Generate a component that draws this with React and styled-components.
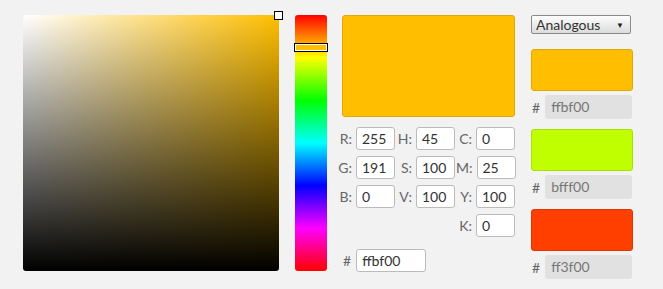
import React from 'react'
import styled, { createGlobalStyle } from 'styled-components'

const GlobalStyle = createGlobalStyle`
  body {
    margin: 0;
    background: #f2f2f2;
    font-family: Lato, "Liberation Sans", sans-serif;
  }
`;

const Page = styled.div`
  display: flex;
  align-items: flex-start;
  padding: 15px 0 0 23px;
`;

const SVBox = styled.div`
  position: relative;
  width: 256px;
  height: 256px;
  border-radius: 3px;
  background:
    linear-gradient(to top, #000 0%, rgba(0, 0, 0, 0) 100%),
    linear-gradient(to right, #fff 0%, rgba(255, 255, 255, 0) 100%),
    ${({ hue }) => hue};
`;

const SVHandle = styled.div`
  position: absolute;
  top: -4px;
  right: -4px;
  width: 9px;
  height: 9px;
  box-sizing: border-box;
  border: 1px solid #000;
  background: #fff;
`;

const HueBar = styled.div`
  position: relative;
  margin-left: 16px;
  width: 32px;
  height: 256px;
  border-radius: 3px;
  background: linear-gradient(
    to bottom,
    #f00 0%, #ff0 16.67%, #0f0 33.33%, #0ff 50%, #00f 66.67%, #f0f 83.33%, #f00 100%
  );
`;

const HueHandle = styled.div`
  position: absolute;
  left: -1px;
  top: 28px;
  width: 34px;
  height: 9px;
  box-sizing: border-box;
  border: 1px solid #000;
  box-shadow: inset 0 0 0 1px #fff;
  background: ${({ color }) => color};
`;

const Middle = styled.div`
  margin-left: 15px;
  width: 173px;
`;

const Preview = styled.div`
  height: 102px;
  box-sizing: border-box;
  border: 1px solid #e0a800;
  border-radius: 3px;
  background: ${({ color }) => color};
`;

const ValueGrid = styled.div`
  display: grid;
  grid-template-columns: repeat(3, 59px);
  column-gap: 1px;
  row-gap: 6px;
  margin: 10px 0 0 -6px;
`;

const Field = styled.div`
  display: flex;
  align-items: center;
  grid-column: ${({ col }) => col || 'auto'};
`;

const Label = styled.span`
  flex: 1;
  text-align: right;
  padding-right: 4px;
  font-size: 14px;
  color: #666;
`;

const NumInput = styled.input`
  width: ${({ w }) => w || 39}px;
  height: 23px;
  box-sizing: border-box;
  border: 1px solid #bbb;
  border-radius: 3px;
  padding: 0 5px;
  background: #fff;
  font-family: Lato, "Liberation Sans", sans-serif;
  font-size: 14px;
  color: #333;
  outline: none;
`;

const HexRow = styled.div`
  display: flex;
  align-items: center;
  gap: 5px;
  margin-top: ${({ top }) => top}px;
`;

const Hash = styled.span`
  font-size: 14px;
  color: #666;
  margin-left: 1px;
`;

const Right = styled.div`
  margin-left: 16px;
  width: 102px;
`;

const SelectWrap = styled.div`
  position: relative;
  width: 100px;

  &::after {
    content: '▼';
    position: absolute;
    right: 7px;
    top: 5px;
    font-size: 8px;
    color: #222;
    pointer-events: none;
  }
`;

const Select = styled.select`
  display: block;
  appearance: none;
  width: 100px;
  height: 19px;
  box-sizing: border-box;
  border: 1px solid #8a8a8a;
  border-radius: 2px;
  padding: 0 0 0 4px;
  background: linear-gradient(to bottom, #fdfdfd, #dcdcdc);
  font-family: Lato, "Liberation Sans", sans-serif;
  font-size: 14px;
  color: #333;
  outline: none;
`;

const SchemeList = styled.div`
  display: flex;
  flex-direction: column;
  gap: 10px;
  margin-top: 15px;
`;

const Scheme = styled.div`
  display: flex;
  flex-direction: column;
  gap: 4px;
`;

const Swatch = styled.div`
  height: 42px;
  box-sizing: border-box;
  border: 1px solid ${({ edge }) => edge};
  border-radius: 3px;
  background: ${({ color }) => color};
`;

const HexBox = styled.div`
  width: 87px;
  height: 24px;
  box-sizing: border-box;
  padding-left: 6px;
  line-height: 24px;
  border-radius: 3px;
  background: #e1e1e1;
  font-size: 14px;
  color: #777;
`;

const rows = [
  [['R', '255'], ['H', '45'], ['C', '0']],
  [['G', '191'], ['S', '100'], ['M', '25']],
  [['B', '0'], ['V', '100'], ['Y', '100']],
];

const schemes = [
  { hex: 'ffbf00', edge: '#e3a900' },
  { hex: 'bfff00', edge: '#a9e000' },
  { hex: 'ff3f00', edge: '#e03500' },
];

export default function App() {
  return (
    <>
      <GlobalStyle />
      <Page>
        <SVBox hue="#ffbf00">
          <SVHandle />
        </SVBox>
        <HueBar>
          <HueHandle color="#ffbf00" />
        </HueBar>
        <Middle>
          <Preview color="#ffbf00" />
          <ValueGrid>
            {rows.flat().map(([name, value]) => (
              <Field key={name}>
                <Label>{name}:</Label>
                <NumInput readOnly value={value} />
              </Field>
            ))}
            <Field col={3}>
              <Label>K:</Label>
              <NumInput readOnly value="0" />
            </Field>
          </ValueGrid>
          <HexRow top={12}>
            <Hash>#</Hash>
            <NumInput w={70} readOnly value="ffbf00" />
          </HexRow>
        </Middle>
        <Right>
          <SelectWrap>
            <Select defaultValue="analogous">
              <option value="analogous">Analogous</option>
              <option value="complementary">Complementary</option>
              <option value="triad">Triad</option>
            </Select>
          </SelectWrap>
          <SchemeList>
            {schemes.map((s) => (
              <Scheme key={s.hex}>
                <Swatch color={'#' + s.hex} edge={s.edge} />
                <HexRow top={0}>
                  <Hash>#</Hash>
                  <HexBox>{s.hex}</HexBox>
                </HexRow>
              </Scheme>
            ))}
          </SchemeList>
        </Right>
      </Page>
    </>
  )
}
